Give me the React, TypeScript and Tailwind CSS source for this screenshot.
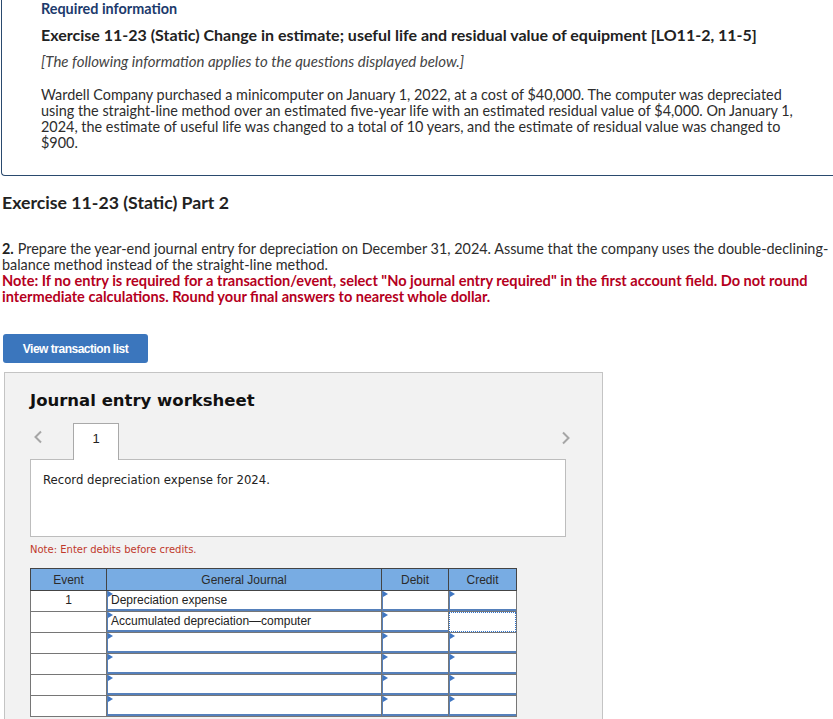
import React from "react";

const sans = { fontFamily: "Lato, 'Open Sans', sans-serif" };

function Marker() {
  return (
    <span className="absolute left-0 top-0 h-0 w-0 border-y-[3px] border-l-[5px] border-y-transparent border-l-[#3f76c2]" />
  );
}

function InputCell({ text, focus, width }: { text?: string; focus?: boolean; width: string }) {
  return (
    <td className={`${width} h-[21px] border border-[#767676] p-0 align-top`}>
      <div
        className={
          focus
            ? "relative h-[20px] border border-dotted border-[#2f74d0] bg-white"
            : "relative h-[20px] border-b-2 border-l border-[#5580bb] bg-white"
        }
      >
        {!focus && <Marker />}
        {text && <span className="block pl-[3px] pt-[2px] leading-[15px]">{text}</span>}
      </div>
    </td>
  );
}

const rows = [
  { ev: "1", acct: "Depreciation expense" },
  { ev: "", acct: "Accumulated depreciation\u2014computer", focus: true },
  { ev: "", acct: "" },
  { ev: "", acct: "" },
  { ev: "", acct: "" },
  { ev: "", acct: "" },
];

export default function App() {
  return (
    <div className="min-h-[719px] w-[833px] overflow-hidden bg-white text-[#2d2d2d]" style={sans}>
      {/* required information box */}
      <div className="ml-[1px] rounded-bl-[4px] border-b border-l border-[#2a4a6e] pb-[24px] pl-[39px]">
        <div className="text-[14.4px] font-bold leading-[18px] text-[#1c3a6c]">Required information</div>
        <div className="mt-[8px] text-[16px] font-bold leading-[18px] text-[#222]">
          Exercise 11-23 (Static) Change in estimate; useful life and residual value of equipment [LO11-2, 11-5]
        </div>
        <div className="mt-[8px] text-[15px] italic leading-[18px] text-[#444]">
          [The following information applies to the questions displayed below.]
        </div>
        <p className="mt-[17px] pr-[30px] text-[14.4px] leading-[16px]">
          Wardell Company purchased a minicomputer on January 1, 2022, at a cost of $40,000. The computer was depreciated
          using the straight-line method over an estimated five-year life with an estimated residual value of $4,000. On January 1,
          2024, the estimate of useful life was changed to a total of 10 years, and the estimate of residual value was changed to
          $900.
        </p>
      </div>

      <h2 className="mt-[17px] pl-[2px] text-[17.7px] font-bold leading-[20px] text-[#222]">Exercise 11-23 (Static) Part 2</h2>

      <div className="mt-[28px] pl-[2px] pr-[4px] text-[14.4px] leading-[16px]">
        <p>
          <b className="mr-[4px] inline-block text-[#222]">2.</b>Prepare the year-end journal entry for depreciation on December 31, 2024. Assume that the company uses the double-declining-balance method instead of the straight-line method.
        </p>
        <p className="text-[14.6px] font-bold text-[#b5001d]">
          Note: If no entry is required for a transaction/event, select "No journal entry required" in the first account field. Do not round intermediate calculations. Round your final answers to nearest whole dollar.
        </p>
      </div>

      <button
        className="ml-[3px] mt-[29px] flex h-[29px] w-[145px] items-center justify-center rounded-[3px] bg-[#3b76bd] text-[12px] font-bold tracking-[-0.5px] text-white"
        style={{ fontFamily: "'Liberation Sans', Arial, sans-serif" }}
      >
        View transaction list
      </button>

      {/* worksheet */}
      <div
        className="ml-[4px] mt-[9px] w-[599px] border border-[#c4c4c4] bg-[#f2f2f2] pb-[10px] pl-[25px]"
        style={{ fontFamily: "'DejaVu Sans', Verdana, sans-serif" }}
      >
        <div className="pt-[17px] text-[16.5px] font-bold leading-[22px] text-[#111]">Journal entry worksheet</div>

        <div className="mt-[11px] flex h-[37px] w-[536px] items-start">
          <svg width="12" height="14" viewBox="0 0 12 14" className="ml-[2px] mt-[7px]">
            <path d="M9 1.5 L3.5 7 L9 12.5" fill="none" stroke="#a6a6a6" strokeWidth="2" />
          </svg>
          <div
            className="ml-[29px] flex h-[37px] w-[46px] items-start justify-center border-x border-t border-[#a9a9a9] bg-white pt-[5px] text-[13px] text-[#222]"
            style={{ fontFamily: "'Liberation Sans', Arial, sans-serif" }}
          >
            1
          </div>
          <svg width="12" height="14" viewBox="0 0 12 14" className="ml-auto mr-[-6px] mt-[8px]">
            <path d="M3 1.5 L8.5 7 L3 12.5" fill="none" stroke="#a6a6a6" strokeWidth="2" />
          </svg>
        </div>

        <div className="-mt-px h-[78px] w-[536px] border border-[#bdbdbd] bg-white pl-[12px] pt-[12px] text-[11.7px] leading-[16px] text-[#222]">
          Record depreciation expense for 2024.
        </div>

        <div className="mt-[6px] text-[10px] leading-[14px] text-[#c0392b]">Note: Enter debits before credits.</div>

        <table
          className="mt-[11px] border-collapse text-[12px] text-[#222]"
          style={{ fontFamily: "'Liberation Sans', Arial, sans-serif" }}
        >
          <thead>
            <tr className="h-[22px] bg-[#78ace3] text-[#2b2b2b]">
              <th className="w-[76px] border border-[#444] font-normal">Event</th>
              <th className="w-[275px] border border-[#444] font-normal">General Journal</th>
              <th className="w-[67px] border border-[#444] font-normal">Debit</th>
              <th className="w-[68px] border border-[#444] font-normal">Credit</th>
            </tr>
          </thead>
          <tbody>
            {rows.map((r, i) => (
              <tr key={i} className="h-[21px]">
                <td className="w-[76px] border border-[#767676] bg-white p-0 text-center align-top leading-[18px]">{r.ev}</td>
                <InputCell width="w-[275px]" text={r.acct} />
                <InputCell width="w-[67px]" />
                <InputCell width="w-[68px]" focus={r.focus} />
              </tr>
            ))}
          </tbody>
        </table>
      </div>
    </div>
  );
}
